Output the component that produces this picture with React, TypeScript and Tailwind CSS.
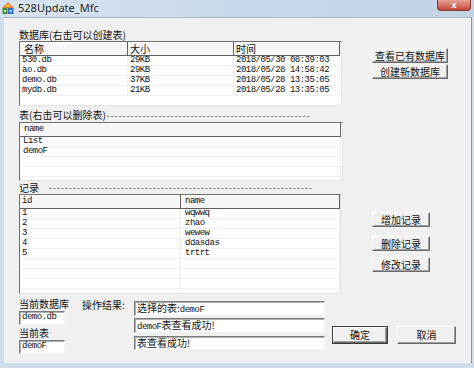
import React from "react";

const CJK = "font-['Noto_Sans_CJK_SC',sans-serif]";
const MONO = "font-['Liberation_Mono','Noto_Sans_CJK_SC',monospace] text-[9px] tracking-[-0.5px]";

function Btn({ label, className }: { label: string; className: string }) {
  return (
    <div
      className={`flex items-center justify-center bg-[#f0f0f0] border border-t-white border-l-white border-r-[#696969] border-b-[#696969] shadow-[inset_-1px_-1px_0_#a0a0a0] text-[10px] leading-none text-[#111] ${CJK} ${className}`}
    >
      {label}
    </div>
  );
}

function Edit({ children, className }: { children: React.ReactNode; className: string }) {
  return (
    <div
      className={`flex items-center bg-white border border-t-[#7a7a7a] border-l-[#7a7a7a] border-r-[#f4f4f4] border-b-[#f4f4f4] shadow-[inset_1px_1px_0_#b0b0b0] pl-[2px] text-[#111] whitespace-nowrap overflow-hidden ${className}`}
    >
      {children}
    </div>
  );
}

const HEAD =
  "h-full flex items-center bg-[#f6f6f6] border-r border-b border-r-[#5f5f5f] border-b-[#5f5f5f] shadow-[inset_1px_1px_0_#ffffff] text-[#111]";
const CELL = "h-full flex items-center border-r border-[#f0f0f0] pl-[2px] text-[#111] whitespace-nowrap overflow-hidden";
const LV =
  "bg-white border border-t-[#6d6d6d] border-l-[#6d6d6d] border-r-[#e4e4e4] border-b-[#e4e4e4] overflow-hidden";
const DASH = "font-['Liberation_Mono',monospace] text-[8px] tracking-[-0.8px] text-[#333] whitespace-nowrap";

const dbs = [
  ["530.db", "29KB", "2018/05/30 08:39:03"],
  ["ao.db", "29KB", "2018/05/28 14:58:42"],
  ["demo.db", "37KB", "2018/05/28 13:35:05"],
  ["mydb.db", "21KB", "2018/05/28 13:35:05"],
];
const tables = ["List", "demoF", "", "", ""];
const records = [
  ["1", "wqwwq"],
  ["2", "zhao"],
  ["3", "wewew"],
  ["4", "ddasdas"],
  ["5", "trtrt"],
  ["", ""],
  ["", ""],
  ["", ""],
  ["", ""],
];

function Icon() {
  return (
    <svg width="14" height="14" viewBox="0 0 14 14">
      <path d="M1 7 L7 1 L13 7 Z" fill="#e8762c" />
      <path d="M3 6 L7 2.5 L11 6 Z" fill="#f6b73c" />
      <rect x="1.5" y="7" width="5" height="6" fill="#3f8f3a" />
      <rect x="7" y="7" width="5.5" height="6" fill="#2f6fc4" />
      <rect x="3" y="9" width="2" height="2" fill="#cfe9a8" />
      <rect x="8.5" y="9" width="2.5" height="2" fill="#a9cdf5" />
    </svg>
  );
}

export default function App() {
  return (
    <div className="w-[474px] h-[368px] bg-[#cfdbe8] flex flex-col overflow-hidden">
      {/* title bar */}
      <div className="h-[17px] flex items-start bg-gradient-to-r from-[#d7e3f0] via-[#c9d8ea] to-[#c3d3e6] relative">
        <div className="ml-[1px] mt-[1px]">
          <Icon />
        </div>
        <div className="ml-[3px] mt-[1px] text-[11px] leading-[13px] text-[#1b1b1b] font-['Noto_Sans',sans-serif] [text-shadow:0_0_6px_#ffffff]">
          528Update_Mfc
        </div>
        <div className="absolute left-[437px] top-0 w-[34px] h-[11px] rounded-b-[4px] border border-t-0 border-[#7d3b33] bg-gradient-to-b from-[#e6a193] to-[#c4473a] flex items-center justify-center text-white text-[9px] font-bold leading-none font-['Liberation_Sans',sans-serif]">
          x
        </div>
      </div>

      <div className="flex h-[346px]">
        <div className="w-[4px]" />
        {/* client */}
        <div className={`w-[467px] h-full bg-[#f0f0f0] border-t border-[#aab6c4] pl-[15px] pt-[10px] flex flex-col ${CJK}`}>
          {/* section 1 */}
          <div className="flex items-start">
            <div className="flex flex-col w-[323px]">
              <div className="h-[13px] text-[10px] leading-[13px] text-[#111]">数据库(右击可以创建表)</div>
              <div className={`h-[65px] ${LV}`}>
                <div className="flex h-[14px] text-[10px] leading-none">
                  <div className={`w-[108px] pl-[4px] ${HEAD}`}>名称</div>
                  <div className={`w-[106px] pl-[2px] ${HEAD}`}>大小</div>
                  <div className={`w-[106px] pl-[2px] ${HEAD}`}>时间</div>
                </div>
                {dbs.map((r, i) => (
                  <div key={i} className={`flex h-[10px] border-b border-[#f0f0f0] ${MONO}`}>
                    <div className={`w-[108px] ${CELL}`}>{r[0]}</div>
                    <div className={`w-[106px] ${CELL}`}>{r[1]}</div>
                    <div className={`w-[106px] ${CELL}`}>{r[2]}</div>
                  </div>
                ))}
              </div>
            </div>
            <div className="ml-[30px] mt-[20px] flex flex-col">
              <Btn label="查看已有数据库" className="w-[76px] h-[15px]" />
              <Btn label="创建新数据库" className="w-[76px] h-[15px] mt-[1px]" />
            </div>
          </div>

          {/* section 2 */}
          <div className="h-[16px] flex items-end pb-[2px] text-[10px] leading-none text-[#111]">
            <span>表(右击可以删除表)</span>
            <span className={DASH}>{"-".repeat(51)}</span>
          </div>
          <div className={`w-[324px] h-[59px] ${LV}`}>
            <div className={`flex h-[14px] ${MONO}`}>
              <div className={`w-[321px] pl-[4px] ${HEAD}`}>name</div>
            </div>
            {tables.map((t, i) => (
              <div key={i} className={`flex h-[10px] border-b border-[#f0f0f0] ${MONO}`}>
                <div className={`w-[321px] pl-[3px] ${CELL}`}>{t}</div>
              </div>
            ))}
          </div>

          {/* section 3 */}
          <div className="flex items-start">
            <div className="flex flex-col w-[322px]">
              <div className="h-[13px] flex items-center text-[10px] leading-none text-[#111]">
                <span>记录</span>
                <span className={`ml-[9px] ${DASH}`}>{"-".repeat(66)}</span>
              </div>
              <div className={`h-[100px] ${LV}`}>
                <div className={`flex h-[14px] ${MONO}`}>
                  <div className={`w-[161px] pl-[2px] ${HEAD}`}>id</div>
                  <div className={`w-[159px] pl-[4px] ${HEAD}`}>name</div>
                </div>
                {records.map((r, i) => (
                  <div key={i} className={`flex h-[10px] border-b border-[#f0f0f0] ${MONO}`}>
                    <div className={`w-[161px] ${CELL}`}>{r[0]}</div>
                    <div className={`w-[159px] pl-[4px] ${CELL}`}>{r[1]}</div>
                  </div>
                ))}
              </div>
            </div>
            <div className="ml-[31px] mt-[31px] flex flex-col">
              <Btn label="增加记录" className="w-[58px] h-[15px]" />
              <Btn label="删除记录" className="w-[58px] h-[15px] mt-[9px]" />
              <Btn label="修改记录" className="w-[58px] h-[15px] mt-[6px]" />
            </div>
          </div>

          {/* section 4 */}
          <div className="flex items-start">
            <div className="flex flex-col w-[46px]">
              <div className="mt-[3px] h-[14px] text-[10px] leading-[14px] text-[#111] whitespace-nowrap">当前数据库</div>
              <Edit className={`h-[14px] ${MONO}`}>demo.db</Edit>
              <div className="mt-[1px] h-[14px] text-[10px] leading-[14px] text-[#111]">当前表</div>
              <Edit className={`h-[14px] ${MONO}`}>demoF</Edit>
            </div>
            <div className="ml-[17px] w-[52px] mt-[4px] h-[14px] text-[10px] leading-[14px] text-[#111] whitespace-nowrap">
              操作结果:
            </div>
            <div className="flex flex-col w-[191px]">
              <Edit className="mt-[7px] h-[15px] text-[10px] leading-[12px]">
                <span>
                  选择的表:<span className={MONO}>demoF</span>
                </span>
              </Edit>
              <Edit className="mt-[2px] h-[15px] text-[10px] leading-[12px]">
                <span>
                  <span className={MONO}>demoF</span>表查看成功!
                </span>
              </Edit>
              <Edit className="mt-[3px] h-[14px] text-[10px] leading-[12px]">
                <span>表查看成功!</span>
              </Edit>
            </div>
            <div className="mt-[32px] ml-[7px] flex">
              <div className="border border-[#3c3c3c]">
                <Btn label="确定" className="w-[54px] h-[16px]" />
              </div>
              <Btn label="取消" className="ml-[9px] w-[59px] h-[18px]" />
            </div>
          </div>
        </div>
        <div className="w-[3px] border-l border-[#8c96a0] bg-[#d5dfea]" />
      </div>
      <div className="h-[5px] bg-[#cfdbe8]" />
    </div>
  );
}
